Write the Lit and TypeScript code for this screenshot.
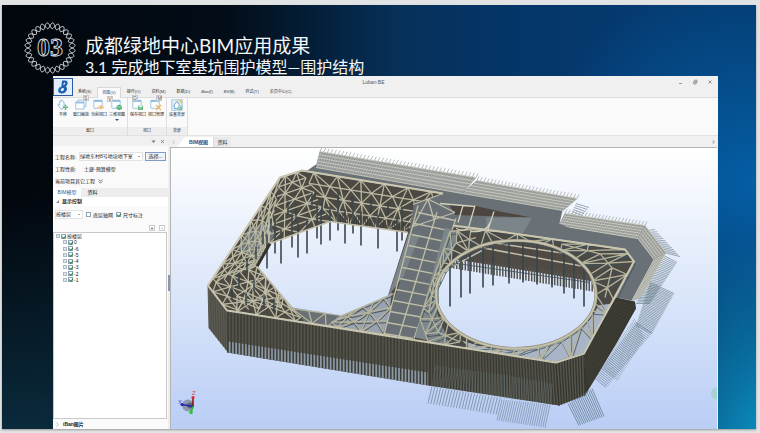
import { LitElement, html, svg, css } from "lit";
import { customElement, state } from "lit/decorators.js";
import { classMap } from "lit/directives/class-map.js";

type P = [number, number];

const mix = (a: P, b: P, t: number): P => [a[0] + (b[0] - a[0]) * t, a[1] + (b[1] - a[1]) * t];
const f = (n: number) => n.toFixed(1);
const seg = (a: P, b: P) => `M${f(a[0])} ${f(a[1])}L${f(b[0])} ${f(b[1])}`;
const poly = (pts: P[]) => pts.map((p) => `${f(p[0])},${f(p[1])}`).join(" ");

/** Parallel strokes that run from edge a-b to edge d-c. */
const hatch = (a: P, b: P, c: P, d: P, n: number) => {
  let out = "";
  for (let i = 0; i <= n; i++) out += seg(mix(a, b, i / n), mix(d, c, i / n));
  return out;
};

/** Truss between edge a-b and edge d-c: chords along it, zigzag braces across it. */
const truss = (a: P, b: P, c: P, d: P, rows: number, cols: number) => {
  let out = "";
  const at = (r: number, k: number) => mix(mix(a, b, k / cols), mix(d, c, k / cols), r / rows);
  for (let r = 0; r <= rows; r++) {
    out += seg(at(r, 0), at(r, cols));
    if (r === rows) break;
    for (let k = 0; k < cols; k++) {
      out += (k + r) % 2 ? seg(at(r, k), at(r + 1, k + 1)) : seg(at(r + 1, k), at(r, k + 1));
      if (k % 2) out += seg(at(r, k), at(r + 1, k));
    }
  }
  return out;
};

/** Point of the round shaft's rim at an angle in degrees. */
const rim = (deg: number): P => {
  const t = (deg * Math.PI) / 180;
  return [516 + 80 * Math.cos(t), 294 + 54 * Math.sin(t)];
};

const FRONT: P[] = [[227, 310], [556, 362], [559, 405], [428, 385], [227, 352]];
const DECK: P[] = [[316, 164], [462, 190], [563, 208], [559, 225], [638, 238], [654, 259], [632, 300], [616, 297], [634, 261], [625, 249], [500, 231], [440, 225], [300, 175]];
const LEFT_PIT: P[] = [[269, 243], [330, 221], [408, 232], [401, 254], [388, 295], [343, 315], [292, 307], [257, 266]];
const FRAME: P[] = [[208, 285], [280, 177], [302, 170], [443, 193], [460, 218], [500, 230], [625, 249], [634, 261], [584, 353], [556, 362], [227, 310]];

const MESH: [P, P, P, P, number][] = [
  [[320, 151], [476, 177], [462, 193], [316, 167], 62],
  [[477, 180], [577, 198], [563, 210], [462, 193], 42],
  [[565, 213], [645, 225], [638, 238], [559, 225], 34],
  [[645, 225], [666, 252], [654, 259], [638, 238], 12],
  [[666, 252], [641, 297], [632, 300], [654, 259], 18],
];

const BEAMS =
  truss([208, 285], [280, 177], [269, 243], [257, 266], 6, 15) +
  truss([280, 177], [302, 170], [330, 221], [269, 243], 7, 4) +
  truss([302, 170], [443, 193], [408, 232], [330, 221], 4, 12) +
  truss([208, 285], [227, 310], [292, 307], [257, 266], 6, 4) +
  truss([227, 310], [305, 322], [292, 307], [257, 266], 3, 8) +
  truss([305, 322], [326, 325], [342, 315], [292, 308], 1, 3);

const LOWER = truss([326, 325], [385, 334], [394, 293], [342, 315], 3, 5);

const STRIP =
  truss([413, 204], [443, 193], [455, 212], [413, 226], 1, 2) +
  [0, 1, 2].map((i) => seg(mix([418, 205], [456, 218], i / 2), mix([384, 334], [414, 338], i / 2))).join("") +
  Array.from({ length: 12 }, (_, i) => seg(mix([418, 212], [384, 333], i / 11), mix([455, 220], [413, 338], i / 11))).join("");

const ringTruss = () => {
  const outer: [number, P][] = [
    [0, [614, 300]], [18, [601, 324]], [36, [584, 353]], [56, [557, 362]], [74, [522, 356]], [90, [502, 353]],
    [108, [480, 350]], [128, [453, 346]], [148, [428, 341]], [168, [420, 318]], [188, [430, 287]], [208, [441, 256]],
    [228, [450, 231]], [244, [471, 229]], [262, [500, 231]], [280, [535, 236]], [298, [570, 241]], [318, [625, 249]],
    [338, [634, 261]], [360, [614, 300]],
  ];
  let out = "";
  for (let i = 0; i < outer.length - 1; i++) {
    const [a0, p0] = outer[i];
    const [a1, p1] = outer[i + 1];
    const wide = (a0 > 120 && a0 < 240) || a0 >= 298;
    out += truss(p0, p1, rim(a1), rim(a0), wide ? 2 : 1, wide ? 3 : 2);
  }
  return out;
};
const RING = ringTruss();

const LEFT_PILES = [[267, 268], [275, 253], [281, 263], [292, 247], [298, 257], [307, 253], [317, 238], [321, 244], [330, 240], [338, 230], [345, 243], [353, 233], [361, 245], [378, 248], [397, 251], [402, 240]];
const RIGHT_PILES = [[450, 306], [461, 297], [470, 293], [483, 287], [493, 285], [509, 283], [523, 282], [537, 284], [552, 287], [564, 293], [574, 298], [584, 306]];
const COLUMNS = [[232, 290], [239, 278], [246, 296], [247, 262], [254, 282], [256, 250], [263, 235], [264, 298], [271, 222], [274, 302], [288, 205], [296, 212], [312, 196], [322, 205], [338, 196], [352, 200], [371, 203], [388, 206]];

const model = () => svg`
  <defs>
    <clipPath id="shaft"><ellipse cx="516" cy="294" rx="79" ry="53"></ellipse></clipPath>
    <linearGradient id="sky" gradientUnits="userSpaceOnUse" x1="0" y1="148" x2="0" y2="428">
      <stop offset="0" stop-color="#ffffff"></stop><stop offset=".5" stop-color="#dce7fa"></stop><stop offset="1" stop-color="#b9cdf5"></stop>
    </linearGradient>
  </defs>
  <g fill="none" stroke="#60747d" stroke-width=".6">
    <path d=${hatch([576, 203], [571, 213], [581, 217], [589, 207], 5)}></path>
    <path d=${hatch([648, 230], [664, 252], [680, 256], [655, 229], 12)}></path>
    <path d=${hatch([664, 255], [636, 303], [650, 303], [677, 262], 30)}></path>
    <path d=${hatch([650, 282], [636, 325], [652, 333], [674, 293], 30)}></path>
    <path d=${hatch([636, 322], [594, 377], [606, 387], [652, 333], 36)}></path>
    <path d=${hatch([634, 318], [600, 366], [618, 380], [644, 338], 30)} opacity=".6"></path>
  </g>
  <polygon points=${poly(DECK)} fill="#697176"></polygon>
  ${MESH.map(([a, b, c, d, n]) => svg`
    <polygon points=${poly([a, b, c, d])} fill="#a6a9a6"></polygon>
    <path d=${hatch(a, b, c, d, n)} stroke="#83888a" stroke-width=".7"></path>
    <path d=${hatch(a, d, c, b, 5)} stroke="#d2d0c2" stroke-width=".8"></path>`)}
  <path d=${MESH.slice(0, 3).map(([a, b, , , n]) => hatch(a, b, [b[0] + 2, b[1] - 4], [a[0] + 2, a[1] - 4], Math.round(n * 0.7))).join("")} stroke="#9aa2a4" stroke-width=".7"></path>

  <polygon points=${poly(FRAME)} fill="#4c4943"></polygon>
  <polygon points="250,226 268,224 276,232 258,262 237,248" fill="#6c777d"></polygon>
  <polygon points="292,306 345,315 326,326 305,322" fill="#697176"></polygon>
  <polygon points="340,315 392,292 386,334 326,326" fill="#98a3b2"></polygon>
  <polygon points="443,193 500,200 625,249 500,231 440,226" fill="#697176"></polygon>
  <polygon points="437,203 470,206 474,205 500,211 532,217 438,214" fill="#4d4640"></polygon>
  <polygon points="486,217 532,217 523,233 487,229" fill="#7b8488"></polygon>
  <path d=${BEAMS} fill="none" stroke="#9c9984" stroke-width="1.3"></path>
  <path d=${BEAMS} fill="none" stroke="#c8c5b0" stroke-width=".7"></path>
  <path d=${COLUMNS.map(([x, y]) => seg([x, y - 4], [x, y + 9])).join("")} stroke="#34434b" stroke-width="1.4"></path>
  <polygon points=${poly(LEFT_PIT)} fill="url(#sky)"></polygon>
  <path d=${hatch([336, 213], [408, 222], [408, 231], [336, 222], 32)} stroke="#3c3a36" stroke-width=".8"></path>
  <path d=${LEFT_PILES.map(([x, y]) => seg([x, y - 34], [x, y])).join("")} stroke="#3c474b" stroke-width="1.6"></path>
  <path d="M257 266L270 243" stroke="#33332f" stroke-width="3"></path>
  <path d="M270 243L330 221L408 232M257 266L292 307" fill="none" stroke="#c0bda8" stroke-width="1.6"></path>
  <path d=${LOWER} transform="translate(0 2)" fill="none" stroke="#4b5557" stroke-width="1"></path>
  <path d=${LOWER} fill="none" stroke="#b5b29c" stroke-width="1.3"></path>
  <polygon points="414,202 443,193 457,218 414,338 383,333 403,272" fill="#687075"></polygon>
  <polygon points="409,232 419,236 404,275 388,296" fill="#7b8488"></polygon>
  <path d=${STRIP} fill="none" stroke="#c0bda8" stroke-width="1.3"></path>

  <ellipse cx="516" cy="294" rx="79" ry="53" fill="url(#sky)"></ellipse>
  <g clip-path="url(#shaft)">
    <polygon points="430,225 600,225 600,282 450,258 430,270" fill="#504a45"></polygon>
    <path d=${hatch([448, 256], [598, 276], [598, 292], [448, 267], 52)} stroke="#55534e" stroke-width="1.5"></path>
    <path d="M470 245L600 269M478 240L600 258M440 262L476 247M445 270L482 250" stroke="#c0bda8" stroke-width="1.5"></path>
    <path d="M450 262L590 282M452 252L470 260L484 250" stroke="#3d525d" stroke-width=".8" fill="none"></path>
    <path d=${RIGHT_PILES.map(([x, y]) => seg([x, y - 46], [x, y])).join("")} stroke="#37454b" stroke-width="1.6"></path>
  </g>
  <polygon points="440,270 452,252 459,231 445,227 415,337 450,345 437,312" fill="#7d878b"></polygon>
  <path d="M598 305L612 303L584 352L556 361L470 348L462 340Q515 360 565 338Q590 326 598 305Z" fill="#a9b5c6"></path>
  <path d=${RING} transform="translate(1 3)" fill="none" stroke="#3f525c" stroke-width=".8"></path>
  <path d=${RING} fill="none" stroke="#b5b29c" stroke-width="1.3"></path>
  <ellipse cx="516" cy="294" rx="80" ry="54" fill="none" stroke="#98957f" stroke-width="3.2"></ellipse>
  <ellipse cx="516" cy="294" rx="80" ry="54" fill="none" stroke="#c5c2ad" stroke-width="1.9"></ellipse>
  <path d="M456 228Q468 233 470 222M471 231Q487 232 490 222M463 205L458 222M475 205L470 222M494 211L488 229M440 203L475 206" fill="none" stroke="#d2cfbd" stroke-width="1.3"></path>

  <polygon points="208,285 227,310 228,352 209,328" fill="#5b5b53"></polygon>
  <path d=${hatch([208, 285], [227, 310], [228, 352], [209, 328], 8)} stroke="#47473f" stroke-width=".8"></path>
  <polygon points=${poly(FRONT)} fill="#54534a"></polygon>
  <polygon points="228,341 428,372 428,385 228,352" fill="#8b98a6"></polygon>
  <path d=${hatch([228, 310], [430, 342], [430, 385], [228, 352], 62)} stroke="#3d3c35" stroke-width="1.5"></path>
  <path d=${hatch([430, 342], [556, 362], [559, 405], [430, 385], 44)} stroke="#3a3a34" stroke-width="1.4"></path>
  <polygon points="556,362 584,353 585,395 559,405" fill="#54544c"></polygon>
  <path d=${hatch([556, 362], [584, 353], [585, 395], [559, 405], 10)} stroke="#34342f" stroke-width="1.2"></path>
  <polygon points="584,353 616,297 635,301 636,308 617,342 585,395" fill="#383730"></polygon>
  <path d=${hatch([584, 358], [616, 300], [635, 306], [590, 385], 26)} stroke="#47463e" stroke-width=".6"></path>
  <g fill="none" stroke-width=".8">
    <path d=${hatch([436, 365], [500, 374], [500, 398], [432, 386], 24)} stroke="#6f8186" opacity=".5"></path>
    <path d=${hatch([502, 374], [552, 383], [550, 403], [502, 398], 20)} stroke="#6f8186" opacity=".5"></path>
    <path d=${hatch([432, 386], [500, 398], [496, 414], [428, 403], 24)} stroke="#75899a"></path>
    <path d=${hatch([502, 399], [550, 404], [545, 427], [497, 420], 22)} stroke="#8195ae"></path>
    <path d=${hatch([568, 403], [592, 388], [604, 416], [579, 425], 14)} stroke="#667d91"></path>
  </g>
  <path d="M443 193L302 170L280 177L208 285L227 310L556 362L584 353L634 261L625 249L500 231L453 225" fill="none" stroke="#c9c6b1" stroke-width="2" stroke-linejoin="round"></path>

  <g stroke-width="1.6" fill="none">
    <circle cx="188" cy="405" r="6" fill="#8f99ac" stroke="none"></circle>
    <circle cx="190" cy="405" r="3" fill="#5e6679" stroke="none"></circle>
    <path d="M193 406V398" stroke="#8e1414"></path><circle cx="193" cy="397" r="1.6" fill="#d8262a"></circle>
    <path d="M193 406L182 404" stroke="#2222b4"></path><circle cx="182" cy="404" r="1.6" fill="#2222b4"></circle>
    <path d="M193 406L191 412" stroke="#1dbb2a"></path><circle cx="191" cy="412" r="1.8" fill="#1dd02a"></circle>
  </g>
  <text x="192" y="394" font-size="6" fill="#e0405a">Z</text>
  <text x="178" y="403" font-size="6" fill="#4a4ad8">X</text>
  <path d="M717 387A6 6 0 0 0 717 399Z" fill="#a6d3cf"></path>
`;

const wave = (phase: number) => {
  let d = "";
  for (let i = 0; i <= 240; i++) {
    const t = (i / 240) * Math.PI * 2;
    const r = 22.3 + 2.9 * Math.sin(t * 14 + phase);
    d += `${i ? "L" : "M"}${(26 + r * Math.cos(t)).toFixed(2)} ${(26 + r * Math.sin(t)).toFixed(2)}`;
  }
  return d + "Z";
};

const frameIcon = svg`<rect x=".8" y="1.3" width="8.4" height="8" rx=".6" fill="#fdfeff" stroke="#8cb9de" stroke-width=".8"></rect><path d="M.8 2H9.2" stroke="#7fb2dc" stroke-width="1.5"></path>`;
const icons: Record<string, unknown> = {
  pan: svg`<path d="M3 9L.9 5.6Q1.3 4.7 2.6 6V2.3Q3.1 1.6 3.6 2.3V1.3Q4.2.5 4.8 1.3V2Q5.5 1.3 6 2.3V3Q6.8 2.6 7.1 3.5V7L6 10H4Z" fill="#f5faff" stroke="#76a9d4" stroke-width=".7"></path><path d="M8.5 5.5V11M5.8 8.3H11.2" stroke="#6dbd8c" stroke-width="1.6"></path>`,
  zoom: svg`<path d="M3 3V1H11V7.5H9" fill="#eef6fd" stroke="#8cb9de" stroke-width=".8"></path><rect x=".8" y="3" width="8.2" height="7" fill="#fdfeff" stroke="#8cb9de" stroke-width=".8"></rect><path d="M.8 3.8H9" stroke="#8cb9de" stroke-width="1.2"></path>`,
  current: svg`${frameIcon}<path d="M4.8 8.4Q7.8 5 11 8.4Q7.8 11.4 4.8 8.4Z" fill="#fff" stroke="#e9b565" stroke-width=".9"></path><circle cx="7.9" cy="8.3" r="1" fill="#e4a23e"></circle>`,
  cube: svg`${frameIcon}<path d="M5.4 7L8.2 5.5L11 7V9.8L8.2 11.2L5.4 9.8Z" fill="#58b57c"></path><path d="M5.4 7L8.2 8.3L11 7" fill="none" stroke="#c5ecd3" stroke-width=".6"></path>`,
  save: svg`${frameIcon}<path d="M6 6.5H11V11H6Z" fill="#72bf8d"></path><path d="M7.3 6.5V8.2H9.8V6.5" fill="#fff"></path>`,
  manage: svg`${frameIcon}<path d="M6 6L11 11M11 6L6 11" stroke="#ecb65a" stroke-width="1.2"></path>`,
  backdrop: svg`<rect x=".8" y=".8" width="10.4" height="10.4" fill="#dceefa" stroke="#91b6d4" stroke-width=".7"></rect><path d="M7 1H11V6Z" fill="#f0cc69"></path><path d="M11 6V11H6Z" fill="#80c79b"></path><path d="M3 6L6 2.5L8.5 6L6.5 9.5H3.6Z" fill="#fff" stroke="#4c91c6" stroke-width=".8"></path>`,
};

const groups = [
  { name: "窗口", tools: [["pan", "平移"], ["zoom", "窗口缩放"], ["current", "当前视口"], ["cube", "三维视图"]] },
  { name: "视口", tools: [["save", "保存视口"], ["manage", "视口管理"]] },
  { name: "背景", tools: [["backdrop", "设置背景"]] },
];

const menus: [string, string][] = [
  ["系统(S)", "S"], ["视图(V)", "V"], ["操作(O)", "O"], ["资料(M)", "M"], ["数据(D)", ""],
  ["iBan(I)", ""], ["BV(B)", ""], ["样式(Y)", ""], ["会员中心(C)", ""],
];

const reset = css`
  * { box-sizing: border-box; }
  button, select, input { font: inherit; color: inherit; margin: 0; padding: 0; border: 0; background: none; border-radius: 0; }
  svg { display: block; }
`;

@customElement("ribbon-bar")
class RibbonBar extends LitElement {
  @state() active = 1;

  static styles = [reset, css`
    :host { display: block; background: #f0f0f0; color: #333; font-size: 4px; line-height: 6px; }
    .head { display: grid; grid-template-columns: 20px 1fr; height: 22px; border-bottom: 1px solid #dcdcdc; }
    .logo { margin: 2px 0 1px; background: #e4eefa; border: 1px solid #2c5aa0; display: grid; place-items: center; }
    .right { display: flex; flex-direction: column; justify-content: space-between; min-width: 0; }
    .caption { display: grid; grid-template-columns: 1fr auto 1fr; align-items: center; height: 11px; font-size: 5px; }
    .caption h1 { margin: 0 44px 0 0; font: inherit; color: #555; }
    .buttons { display: flex; justify-content: flex-end; gap: 9px; padding-right: 5px; }
    .menus { display: flex; gap: 1px; height: 10px; }
    .menu { position: relative; padding: 0 5px; height: 10px; white-space: nowrap; }
    .menu.on { background: #fafafa; border: 1px solid #d8d8d8; border-bottom: 0; color: #2f5c9c; padding: 0 4px; height: 11px; }
    .tip { position: absolute; z-index: 1; left: 50%; top: 8px; width: 6px; height: 6px; margin-left: -2px; background: #f3f3f3; border: 1px solid #c9c9c9; color: #555; font-size: 5px; line-height: 4px; }
    .body { display: flex; height: 38px; background: #fafafa; border-bottom: 1px solid #e2e2e2; }
    .group { display: flex; flex-direction: column; justify-content: space-between; border-right: 1px solid #dedede; }
    .tools { display: flex; padding: 1px 1px 0; }
    .tool { width: 18px; display: flex; flex-direction: column; align-items: center; white-space: nowrap; color: #222; }
    .tool svg { width: 12px; height: 12px; margin-bottom: 1px; }
    .drop { width: 0; border: 2px solid transparent; border-top-color: #2d4f86; border-bottom: 0; margin-top: 1px; }
    .name { height: 8px; line-height: 8px; background: #eee; text-align: center; }
  `];

  render() {
    return html`
      <div class="head">
        <button class="logo" aria-label="Luban"><svg width="14" height="16" viewBox="0 0 14 16"><path fill-rule="evenodd" d="M6 1.5H9.5Q12.6 2 11.3 5.4Q10.7 6.8 9.6 7.4Q11.8 8.6 10.6 11.4Q9 14.6 5.4 14.4Q1.4 14 2.2 10.6Q3 8 5.4 7.4ZM8 3.6L7.2 6.2Q9 6 9.3 4.6Q9.4 3.6 8 3.6ZM6.4 9Q4.6 9.8 4.6 11.6Q5.2 12.6 6.8 12Q8.4 11 8 9.4Q7.4 8.8 6.4 9Z" fill="#1e5fae"></path><path d="M2.4 11.5Q2.4 8.8 5.2 7.8" fill="none" stroke="#45a7dd" stroke-width="1"></path></svg></button>
        <div class="right">
          <div class="caption">
            <span></span><h1>Luban BE</h1>
            <div class="buttons">
              <button aria-label="最小化"><svg width="6" height="6"><path d="M2 4.5H5" stroke="#999"></path></svg></button>
              <button aria-label="还原"><svg width="6" height="6"><path d="M2.5 2V1H5V4H4M1.5 2.5H4V5H1.5Z" fill="#bbb" stroke="#999" stroke-width=".7"></path></svg></button>
              <button aria-label="关闭"><svg width="6" height="6"><path d="M1.5 1.5L4.5 4.5M4.5 1.5L1.5 4.5" stroke="#888" stroke-width=".9"></path></svg></button>
            </div>
          </div>
          <nav class="menus">
            ${menus.map(([label, key], i) => html`<button class=${classMap({ menu: true, on: i === this.active })} @click=${() => (this.active = i)}>${label}${key ? html`<span class="tip">${key}</span>` : ""}</button>`)}
          </nav>
        </div>
      </div>
      <div class="body">
        ${groups.map((g) => html`<section class="group">
          <div class="tools">${g.tools.map(([icon, label]) => html`<button class="tool"><svg viewBox="0 0 12 12">${icons[icon]}</svg><span>${label}</span>${icon === "cube" ? html`<i class="drop"></i>` : ""}</button>`)}</div>
          <div class="name">${g.name}</div>
        </section>`)}
      </div>`;
  }
}

@customElement("project-panel")
class ProjectPanel extends LitElement {
  static styles = [reset, css`
    :host { display: flex; flex-direction: column; background: #fafafa; color: #222; font-size: 5px; line-height: 8px; white-space: nowrap; }
    .bar { display: flex; justify-content: flex-end; align-items: center; gap: 4px; height: 10px; padding-right: 3px; background: #f0f0f0; color: #555; }
    .form { display: grid; gap: 4px; padding: 6px 2px 3px; }
    .row { display: flex; align-items: center; }
    .row label, .row > span:first-child { width: 24px; }
    select { appearance: none; height: 9px; background: #fff; border: 1px solid #e3e3e3; line-height: 7px; }
    .pick { position: relative; display: flex; }
    .pick::after { content: ""; position: absolute; right: 3px; top: 4px; border: 1px solid transparent; border-top-color: #555; border-bottom: 0; }
    .project { flex: 1; min-width: 0; margin-right: 2px; }
    .project select { width: 100%; }
    .choose { width: 21px; height: 9px; border: 1px solid #7f9ac4; background: #eef3fa; line-height: 7px; }
    .gap { margin-left: 5px; }
    .more { text-align: left; display: flex; align-items: center; gap: 3px; }
    .tabs { display: flex; height: 9px; background: #ededed; line-height: 9px; }
    .tab { width: 28px; }
    .tab + .tab { width: 23px; }
    .tab.on { background: #fff; color: #2f5c9c; }
    .title { background: #fff; margin: 0; height: 9px; font: bold 5px/9px "Liberation Sans", "Noto Sans CJK SC", sans-serif; padding-left: 3px; display: flex; align-items: center; gap: 3px; }
    .filters { display: flex; align-items: center; gap: 3px; padding: 4px 2px 3px; }
    .filters select { width: 28px; }
    label { display: flex; align-items: center; gap: 1px; }
    .filters label { gap: 2px; }
    input { appearance: none; width: 5px; height: 5px; border: 1px solid #8fa3b5; background: #fff; display: grid; place-items: center; }
    input:checked::before { content: ""; width: 3px; height: 2px; border: solid #2b8550; border-width: 0 0 1px 1px; transform: rotate(-45deg); }
    .steps { display: flex; justify-content: flex-end; gap: 4px; padding: 3px 3px 1px 0; }
    .steps button { width: 6px; height: 6px; border: 1px solid #ccc; background: #fff; line-height: 4px; }
    .tree { flex: 1; margin: 0 1px 0 0; border: 1px solid #c8c8c8; background: #fff; padding: 0 2px; }
    .tree ul { list-style: none; margin: 0; padding: 0; height: 50px; display: grid; grid-auto-rows: 1fr; }
    .tree li { display: flex; align-items: center; gap: 1px; padding-left: 7px; line-height: 6px; }
    .tree li:first-child { padding-left: 0; }
    .fold { width: 4px; height: 4px; border: 1px solid #b0bac2; background: #e1e6ea; }
    .foot { height: 10px; padding-left: 3px; display: flex; align-items: center; gap: 4px; font-weight: bold; }
  `];

  render() {
    return html`
      <div class="bar"><svg width="5" height="5"><path d="M.5 1.5H4.5L2.5 4Z" fill="#777"></path></svg><svg width="5" height="5"><path d="M1 1L4 4M4 1L1 4" stroke="#777" stroke-width=".8"></path></svg></div>
      <div class="form">
        <div class="row"><label for="project">工程名称:</label><span class="pick project"><select id="project"><option>绿地东村8号地块地下室</option></select></span><button class="choose">选择...</button></div>
        <div class="row"><span>工程性质:</span><span class="gap">土建-预算模型</span></div>
        <button class="more">当前项目其它工程<svg width="5" height="5"><path d="M.5 .5L2.5 2L4.5 .5M.5 2.5L2.5 4L4.5 2.5" fill="none" stroke="#666" stroke-width=".8"></path></svg></button>
      </div>
      <div class="tabs"><button class="tab on">BIM模型</button><button class="tab">资料</button></div>
      <h2 class="title"><svg width="3" height="3"><path d="M3 0V3H0Z" fill="#888"></path></svg>显示控制</h2>
      <div class="filters">
        <span class="pick"><select aria-label="显示方式"><option>按楼层</option></select></span>
        <label><input type="checkbox">底层轴网</label>
        <label><input type="checkbox" checked>尺寸标注</label>
      </div>
      <div class="steps"><button>+</button><button>-</button></div>
      <div class="tree"><ul>
        ${["按楼层", "0", "-6", "-5", "-4", "-3", "-2", "-1"].map((n) => html`<li><i class="fold"></i><label><input type="checkbox" checked>${n}</label></li>`)}
      </ul></div>
      <div class="foot"><svg width="3" height="5"><path d="M.5 .5L2.5 2.5L.5 4.5" fill="none" stroke="#aaa" stroke-width=".7"></path></svg>iBan图片</div>`;
  }
}

@customElement("model-view")
class ModelView extends LitElement {
  static styles = [reset, css`
    :host { display: flex; flex-direction: column; min-width: 0; background: #f0f0f0; color: #333; font-size: 5px; }
    .tabs { display: flex; align-items: stretch; height: 11px; line-height: 10px; padding-left: 1px; }
    .tabs svg { align-self: center; }
    .tab { height: 10px; margin-top: 1px; width: 18px; background: #e9e9e9; border-left: 1px solid #ddd; }
    .tab.on { width: 38px; padding-left: 8px; background: #fff; color: #24528f; font-weight: bold; clip-path: polygon(10px 0, 100% 0, 100% 100%, 2px 100%); }
    .end { margin: 0 2px 0 auto; }
    .canvas { flex: 1; min-height: 0; display: flex; border: solid #b4b4b4; border-width: 1px 0 0 1px; background: linear-gradient(#ffffff, #dce7fa 50%, #b9cdf5); margin-right: 1px; }
    .canvas svg { width: 100%; height: 100%; font-family: "Liberation Sans", sans-serif; }
  `];

  render() {
    return html`
      <div class="tabs">
        <svg width="4" height="6"><path d="M3 1V5L1 3Z" fill="#fff" stroke="#bbb" stroke-width=".6"></path></svg>
        <button class="tab on">BIM视图</button><button class="tab">资料</button>
        <svg class="end" width="4" height="6"><path d="M1 1V5L3 3Z" fill="#ccc" stroke="#bbb" stroke-width=".6"></path></svg>
      </div>
      <div class="canvas"><svg viewBox="171 148 546 280" role="img" aria-label="围护结构">${model()}</svg></div>`;
  }
}

@customElement("app-root")
class AppRoot extends LitElement {
  static styles = [reset, css`
    :host { display: flex; min-height: 100vh; padding: 5px 4px 4px 2px; box-sizing: border-box; background: #e2e3e4; font-family: "Liberation Sans", "Noto Sans CJK SC", sans-serif; }
    .slide {
      flex: 1; min-width: 0; display: flex; flex-direction: column; padding: 0 38px 0 51px;
      background:
        radial-gradient(ellipse 20% 50% at 102% 104%, #0b95cb 0%, #0980b8aa 50%, transparent 100%),
        radial-gradient(ellipse 30% 50% at 100% 42%, #055ea5 0%, transparent 100%),
        linear-gradient(to top, #0a2a3c 0%, transparent 55%),
        linear-gradient(90deg, #02060c 0%, #030d18 30%, #042340 44%, #063058 52%, #053567 65%, #053a70 85%, #043a6e 100%);
      box-shadow: 0 1px 2px #999;
    }
    header { display: flex; height: 71px; color: #f4f6f8; margin-left: -29px; font-family: Lato, "Noto Sans CJK SC", sans-serif; }
    .badge { width: 52px; height: 52px; margin-top: 17px; flex: none; }
    .badge text { font: bold 26px "Liberation Serif", serif; }
    .titles { margin: 29px 0 0 9px; white-space: nowrap; }
    h1 { margin: 0; font-size: 19px; font-weight: 400; line-height: 23px; }
    p { margin: 0; font-size: 16px; line-height: 20px; }
    .window { flex: 1; display: flex; flex-direction: column; background: #f0f0f0; min-height: 0; }
    .work { flex: 1; min-height: 0; display: grid; grid-template-columns: 115px 2px 1fr; }
    .split { display: flex; flex-direction: column; justify-content: center; background: #eee; }
    .grip { height: 16px; background: #8799b3; }
  `];

  render() {
    return html`<main class="slide">
      <header>
        <svg class="badge" viewBox="0 0 52 52" fill="none" stroke="#e6e9ec" aria-hidden="true">
          <path d=${wave(0)} stroke-width=".9"></path><path d=${wave(Math.PI)} stroke-width=".9"></path>
          <text x="26" y="34" text-anchor="middle" stroke-width=".8">03</text>
        </svg>
        <div class="titles"><h1>成都绿地中心BIM应用成果</h1><p>3.1 完成地下室基坑围护模型—围护结构</p></div>
      </header>
      <section class="window">
        <ribbon-bar></ribbon-bar>
        <div class="work"><project-panel></project-panel><div class="split"><div class="grip"></div></div><model-view></model-view></div>
      </section>
    </main>`;
  }
}
